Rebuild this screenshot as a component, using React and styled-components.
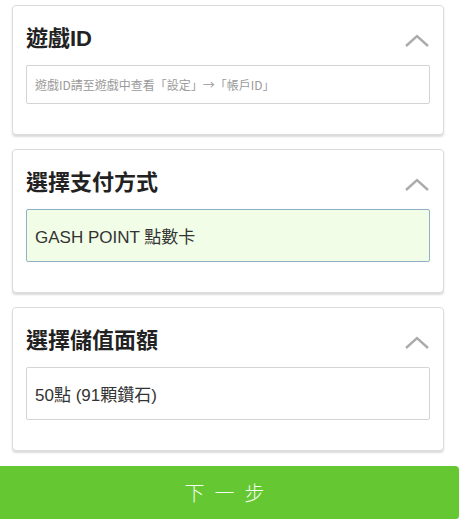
import React from 'react';
import styled, { createGlobalStyle } from 'styled-components';

const GlobalStyle = createGlobalStyle`
  body {
    margin: 0;
    background: #fff;
    font-family: "Liberation Sans", "Noto Sans CJK TC", sans-serif;
    color: #333;
  }
`
const Page = styled.div`
  width: 432px;
  padding: 5px 0 0 12px;
  display: flex;
  flex-direction: column;
  gap: 14px;
`
const Card = styled.section`
  background: #fff;
  border: 1px solid #dcdcdc;
  border-radius: 4px;
  box-shadow: 0 2px 2px rgba(0, 0, 0, 0.14);
  padding: 0 13px 30px 13px;
`
const Header = styled.div`
  display: flex;
  align-items: center;
  justify-content: space-between;
  padding-top: 20px;
  height: 26px;
  margin-bottom: 13px;
`
const Title = styled.h2`
  margin: 0;
  font-size: 22px;
  font-weight: 700;
  line-height: 26px;
  color: #222;
`
const Chevron = styled.svg`
  width: 26px;
  height: 15px;
  margin-top: 2px;
`
const Field = styled.div`
  display: flex;
  align-items: center;
  height: ${p => (p.$small ? '37px' : '51px')};
  padding: 0 8px;
  border: 1px solid ${p => (p.$active ? '#8fb0c2' : '#d4d4d4')};
  border-radius: 2px;
  background: ${p => (p.$active ? '#f1fde6' : '#fff')};
  font-family: ${p => (p.$small ? '"Noto Sans CJK TC", sans-serif' : 'inherit')};
  font-size: ${p => (p.$small ? '12px' : '17px')};
  color: ${p => (p.$small ? '#9a9a9a' : '#333')};
`
const NextButton = styled.button`
  margin: 1px 0 0 -12px;
  width: 459px;
  height: 53px;
  border: none;
  border-radius: 0 4px 4px 0;
  background: #65c832;
  box-shadow: 0 1px 1px rgba(0, 0, 0, 0.25);
  color: #f4fbef;
  font-family: "Noto Sans CJK TC", sans-serif;
  font-size: 20px;
  font-weight: 300;
  letter-spacing: 10px;
  padding-left: 6px;
`

function Section({ title, children }) {
  return (
    <Card>
      <Header>
        <Title>{title}</Title>
        <Chevron viewBox="0 0 26 15">
          <polyline points="2,13 13,3 24,13" fill="none" stroke="#ababab" strokeWidth="2.4" />
        </Chevron>
      </Header>
      {children}
    </Card>
  )
}

export default function App() {
  return (
    <>
      <GlobalStyle />
      <Page>
        <Section title="遊戲ID">
          <Field $small>遊戲ID請至遊戲中查看「設定」→「帳戶ID」</Field>
        </Section>
        <Section title="選擇支付方式">
          <Field $active>GASH POINT 點數卡</Field>
        </Section>
        <Section title="選擇儲值面額">
          <Field>50點 (91顆鑽石)</Field>
        </Section>
        <NextButton>下一步</NextButton>
      </Page>
    </>
  )
}
